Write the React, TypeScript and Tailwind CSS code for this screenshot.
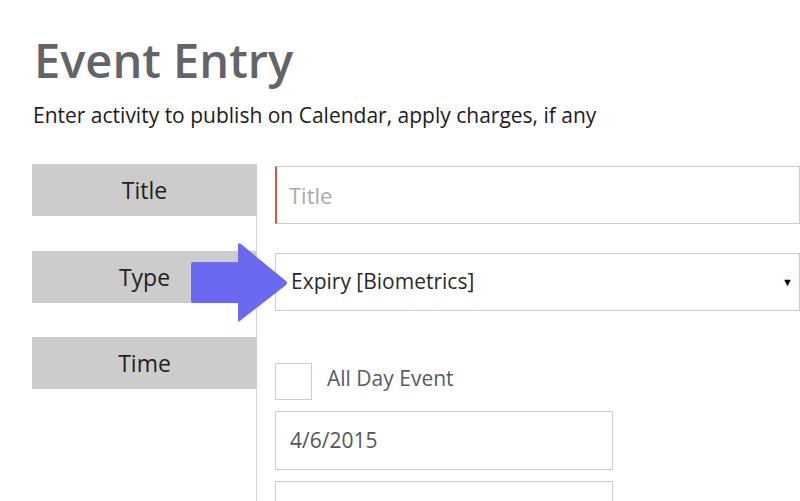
import React from "react";

const font = { fontFamily: '"Open Sans", "Noto Sans", sans-serif' };

function Label({ text }: { text: string }) {
  return (
    <div className="h-[52px] w-[225px] bg-[#cdcccd] flex items-center justify-center text-[23px] text-[#222] pt-[1px]">
      {text}
    </div>
  );
}

export default function App() {
  return (
    <div className="relative w-[800px] h-[501px] overflow-hidden bg-white" style={font}>
      <div className="pl-[33px] pt-[30px]">
        <h1 className="text-[47px] leading-[60px] font-semibold text-[#636468] ml-[1px]">Event Entry</h1>
        <p className="mt-[11px] text-[21px] leading-[28px] text-[#1c1c1c]">
          Enter activity to publish on Calendar, apply charges, if any
        </p>
      </div>
      <div className="ml-[32px] mt-[35px] flex">
        <div className="w-[225px] border-r border-[#d6d6d6] shrink-0 flex flex-col h-[400px]">
          <Label text="Title" />
          <div className="h-[35px]" />
          <Label text="Type" />
          <div className="h-[34px]" />
          <Label text="Time" />
        </div>
        <div className="pl-[18px] flex flex-col w-[543px] shrink-0">
          <div className="mt-[2px] h-[58px] w-[525px] border border-[#cccccc] border-l-2 border-l-[#d9534f] flex items-center pl-[12px] text-[22px] text-[#aaaaaa]">
            Title
          </div>
          <div className="mt-[29px] h-[58px] w-[525px] border border-[#cccccc] flex items-center pl-[15px] pr-[6px] text-[21px] text-[#2a2a2a]">
            <span className="flex-1">Expiry [Biometrics]</span>
            <span className="text-[11px] text-black">▼</span>
          </div>
          <div className="mt-[52px] flex items-center">
            <div className="w-[37px] h-[37px] border border-[#cccccc]" />
            <span className="ml-[15px] text-[21px] text-[#5a5a5f] -mt-[6px]">All Day Event</span>
          </div>
          <div className="mt-[11px] h-[59px] w-[338px] border border-[#cccccc] flex items-center pl-[14px] text-[21px] text-[#555559]">
            4/6/2015
          </div>
          <div className="mt-[11px] h-[59px] w-[338px] border border-[#cccccc]" />
        </div>
      </div>
      <svg className="absolute left-0 top-0" width="800" height="501" viewBox="0 0 800 501">
        <path
          d="M193 262 L238 262 L238 245 Q238 242 241 244 L286 281 Q288 283 286 285 L241 320 Q238 323 238 320 L238 303 L193 303 Q191 303 191 301 L191 264 Q191 262 193 262 Z"
          fill="#6a69ef"
        />
      </svg>
    </div>
  );
}
